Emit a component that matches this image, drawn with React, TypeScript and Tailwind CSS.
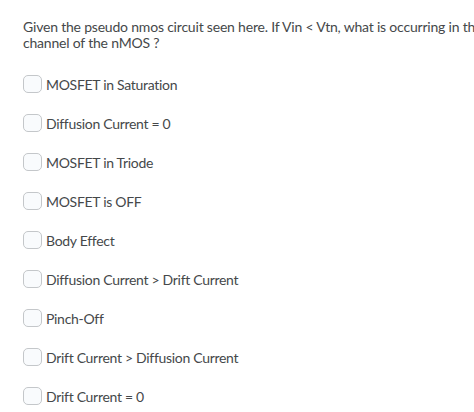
import React from 'react';

const options = [
  'MOSFET in Saturation',
  'Diffusion Current = 0',
  'MOSFET in Triode',
  'MOSFET is OFF',
  'Body Effect',
  'Diffusion Current > Drift Current',
  'Pinch-Off',
  'Drift Current > Diffusion Current',
  'Drift Current = 0',
];

export default function App() {
  return (
    <div
      className="w-[474px] h-[412px] overflow-hidden bg-white text-[#45484a]"
      style={{ fontFamily: 'Lato, "Noto Sans", sans-serif' }}
    >
      <div className="pl-[23px] pt-[19px] w-[560px] whitespace-nowrap text-[14px] leading-[16px] tracking-[-0.2px]">
        <div>Given the pseudo nmos circuit seen here. If Vin &lt; Vtn, what is occurring in the</div>
        <div>channel of the nMOS ?</div>
      </div>
      <div className="flex flex-col gap-[21px] pl-[23px] pt-[24px] tracking-[-0.3px]">
        {options.map((opt) => (
          <label key={opt} className="flex items-center h-[18px] text-[14px]">
            <span className="w-[19px] h-[18px] shrink-0 rounded-[5px] border border-[#c4c7ca] bg-[#f9fbfd]" />
            <span className="ml-[4px]">{opt}</span>
          </label>
        ))}
      </div>
    </div>
  );
}
